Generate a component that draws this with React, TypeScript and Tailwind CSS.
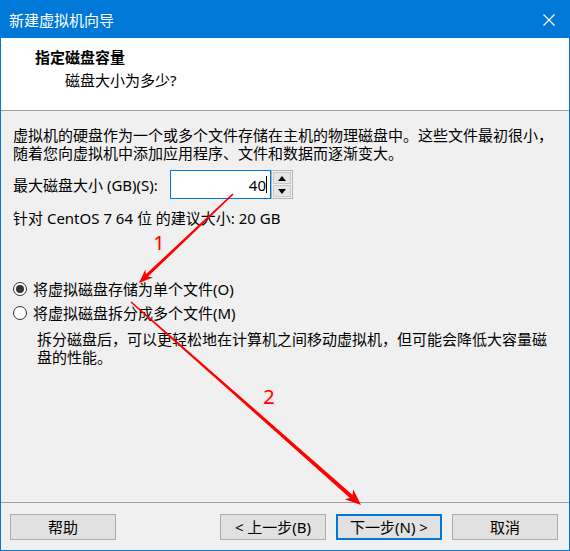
import React from 'react'

const font = { fontFamily: '"Noto Sans", "Noto Sans CJK SC", sans-serif' }

function arrowPoints(x1: number, y1: number, x2: number, y2: number, w0: number, w1: number, headLen: number, headW: number) {
  const dx = x2 - x1
  const dy = y2 - y1
  const len = Math.hypot(dx, dy)
  const ux = dx / len
  const uy = dy / len
  const nx = -uy
  const ny = ux
  const bx = x2 - ux * headLen
  const by = y2 - uy * headLen
  const nbx = x2 - ux * (headLen - 3)
  const nby = y2 - uy * (headLen - 3)
  const pts = [
    [x1 + nx * w0, y1 + ny * w0],
    [nbx + nx * w1, nby + ny * w1],
    [bx + nx * headW, by + ny * headW],
    [x2, y2],
    [bx - nx * headW, by - ny * headW],
    [nbx - nx * w1, nby - ny * w1],
    [x1 - nx * w0, y1 - ny * w0],
  ]
  return pts.map((p) => `${p[0].toFixed(1)},${p[1].toFixed(1)}`).join(' ')
}

function Radio({ checked, label }: { checked?: boolean; label: string }) {
  return (
    <div className="flex items-center h-[18px] leading-[18px]">
      <span className="w-[14px] h-[14px] rounded-full border border-[#333] bg-white flex items-center justify-center">
        {checked && <span className="w-[8px] h-[8px] rounded-full bg-[#333]" />}
      </span>
      <span className="ml-[6px] whitespace-nowrap">{label}</span>
    </div>
  )
}

function Btn({ children, primary }: { children: React.ReactNode; primary?: boolean }) {
  return (
    <button
      className={
        primary
          ? 'w-[106px] h-[26px] border-2 border-[#0078d7] bg-[#e1e1e1] text-[15px] leading-[20px] text-black'
          : 'w-[106px] h-[26px] border border-[#adadad] bg-[#e1e1e1] text-[15px] leading-[20px] text-black'
      }
    >
      {children}
    </button>
  )
}

export default function App() {
  return (
    <div className="relative w-[570px] h-[551px] border border-[#0078d7] bg-[#f0f0f0] flex flex-col overflow-hidden text-black" style={font}>
      {/* title bar */}
      <div className="h-[37px] bg-[#0078d7] flex items-center justify-between pl-[8px] pr-[14px]">
        <span className="text-white text-[15px] leading-[20px]">新建虚拟机向导</span>
        <svg width="12" height="12" viewBox="0 0 12 12">
          <path d="M0.5 0.5 L11.5 11.5 M11.5 0.5 L0.5 11.5" stroke="#fff" strokeWidth="1.2" />
        </svg>
      </div>

      {/* header */}
      <div className="h-[73px] bg-white border-b border-[#a0a0a0] pl-[34px] pt-[9px]">
        <div className="text-[15px] leading-[20px] font-bold">指定磁盘容量</div>
        <div className="text-[15px] leading-[20px] mt-[3px] ml-[30px]">磁盘大小为多少?</div>
      </div>

      {/* body */}
      <div className="flex-1 pl-[12px] pr-[12px] pt-[15px] text-[15px] leading-[18px]">
        <div className="whitespace-nowrap">虚拟机的硬盘作为一个或多个文件存储在主机的物理磁盘中。这些文件最初很小，</div>
        <div className="whitespace-nowrap">随着您向虚拟机中添加应用程序、文件和数据而逐渐变大。</div>

        <div className="flex items-center mt-[8px] h-[29px]">
          <span className="w-[157px] whitespace-nowrap">最大磁盘大小 (GB)(S):</span>
          <div className="w-[101px] h-[29px] border border-[#0078d7] bg-white flex items-center justify-end pr-[3px]">
            <span>40</span>
            <span className="w-px h-[17px] bg-black" />
          </div>
          <div className="w-[22px] h-[29px] border border-[#b4b4b4] bg-[#f0f0f0] flex flex-col gap-px p-px">
            <div className="flex-1 bg-[#e5e5e5] border border-[#c8c8c8] flex items-center justify-center">
              <svg width="8" height="5" viewBox="0 0 8 5"><path d="M4 0 L8 5 L0 5 Z" fill="#000" /></svg>
            </div>
            <div className="flex-1 bg-[#e5e5e5] border border-[#c8c8c8] flex items-center justify-center">
              <svg width="8" height="5" viewBox="0 0 8 5"><path d="M0 0 L8 0 L4 5 Z" fill="#000" /></svg>
            </div>
          </div>
        </div>

        <div className="mt-[10px] whitespace-nowrap">针对 CentOS 7 64 位 的建议大小: 20 GB</div>

        <div className="mt-[53px]">
          <Radio checked label="将虚拟磁盘存储为单个文件(O)" />
        </div>
        <div className="mt-[6px]">
          <Radio label="将虚拟磁盘拆分成多个文件(M)" />
        </div>
        <div className="mt-[8px] ml-[24px]">
          <div className="whitespace-nowrap">拆分磁盘后，可以更轻松地在计算机之间移动虚拟机，但可能会降低大容量磁</div>
          <div className="whitespace-nowrap">盘的性能。</div>
        </div>
      </div>

      {/* footer */}
      <div className="h-[48px] border-t border-[#a0a0a0] flex items-start pt-[11px] pl-[9px] pr-[11px]">
        <Btn>帮助</Btn>
        <div className="flex-1" />
        <div className="flex gap-[10px]">
          <Btn>&lt; 上一步(B)</Btn>
          <Btn primary>下一步(N) &gt;</Btn>
          <Btn>取消</Btn>
        </div>
      </div>

      {/* annotations */}
      <svg className="absolute left-0 top-0 pointer-events-none" width="570" height="551" viewBox="0 0 570 551">
        <polygon points={arrowPoints(232, 193, 138, 282, 0.8, 1.6, 14, 5.5)} fill="#ff0000" />
        <polygon points={arrowPoints(130, 301, 360, 504, 0.8, 2, 16, 6.5)} fill="#ff0000" />
        <text x="158" y="249" fontSize="20" textAnchor="middle" fill="#ff0000" stroke="#e8e8e8" strokeWidth="3" paintOrder="stroke" style={{ fontFamily: '"Noto Sans", sans-serif' }}>1</text>
        <text x="268" y="403" fontSize="20" textAnchor="middle" fill="#ff0000" stroke="#e8e8e8" strokeWidth="3" paintOrder="stroke" style={{ fontFamily: '"Noto Sans", sans-serif' }}>2</text>
      </svg>
    </div>
  )
}
